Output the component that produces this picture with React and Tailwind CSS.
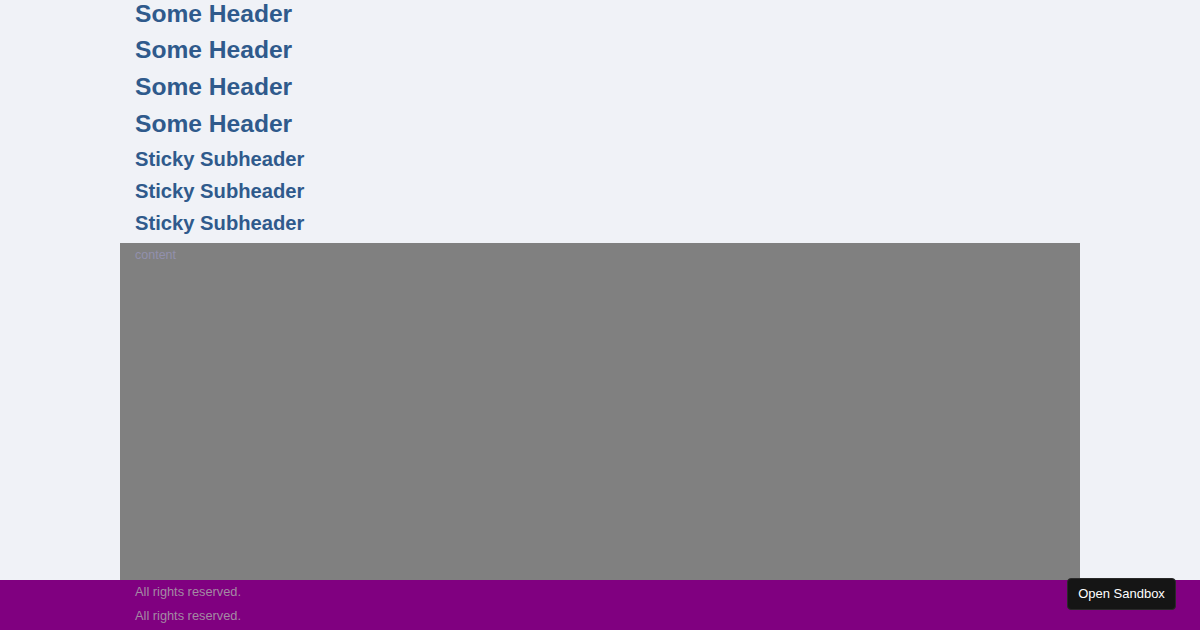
import React from "react";

const headers = ["Some Header", "Some Header", "Some Header", "Some Header"];
const subheaders = ["Sticky Subheader", "Sticky Subheader", "Sticky Subheader"];

const App = () => {
	return (
		<div
			className="relative h-[630px] overflow-hidden bg-[#f0f2f7] flex flex-col"
			style={{ fontFamily: '"Liberation Sans", Arial, sans-serif' }}
		>
			<div className="w-[960px] mx-auto flex flex-col flex-1 -mt-[4px]">
				{headers.map((h, i) => (
					<div
						key={"h" + i}
						className="h-[36.6px] flex items-center px-[15px] text-[24.6px] font-bold text-[#2f5a8c]"
					>
						{h}
					</div>
				))}
				<div className="mt-[1px]" />
				{subheaders.map((s, i) => (
					<div
						key={"s" + i}
						className="h-[32px] flex items-center px-[15px] text-[20.2px] font-bold text-[#2f5a8c]"
					>
						{s}
					</div>
				))}
				<div className="mt-[4px] flex-1 bg-[#808080] px-[15px] pt-[3px] text-[12.5px] text-[#9290ad]">
					content
				</div>
			</div>
			<footer className="h-[50px] bg-[#800080]">
				<div className="w-[960px] mx-auto px-[15px] text-[12.8px] text-[#a38aa3] flex flex-col">
					<div className="h-[24px] flex items-center">All rights reserved.</div>
					<div className="h-[24px] flex items-center">All rights reserved.</div>
				</div>
			</footer>
			<button className="absolute right-[24px] bottom-[20px] h-[32px] w-[109px] rounded-[4px] bg-[#151515] text-white text-[13px] border border-[#2a2a2a]">
				Open Sandbox
			</button>
		</div>
	);
};

export default App;
